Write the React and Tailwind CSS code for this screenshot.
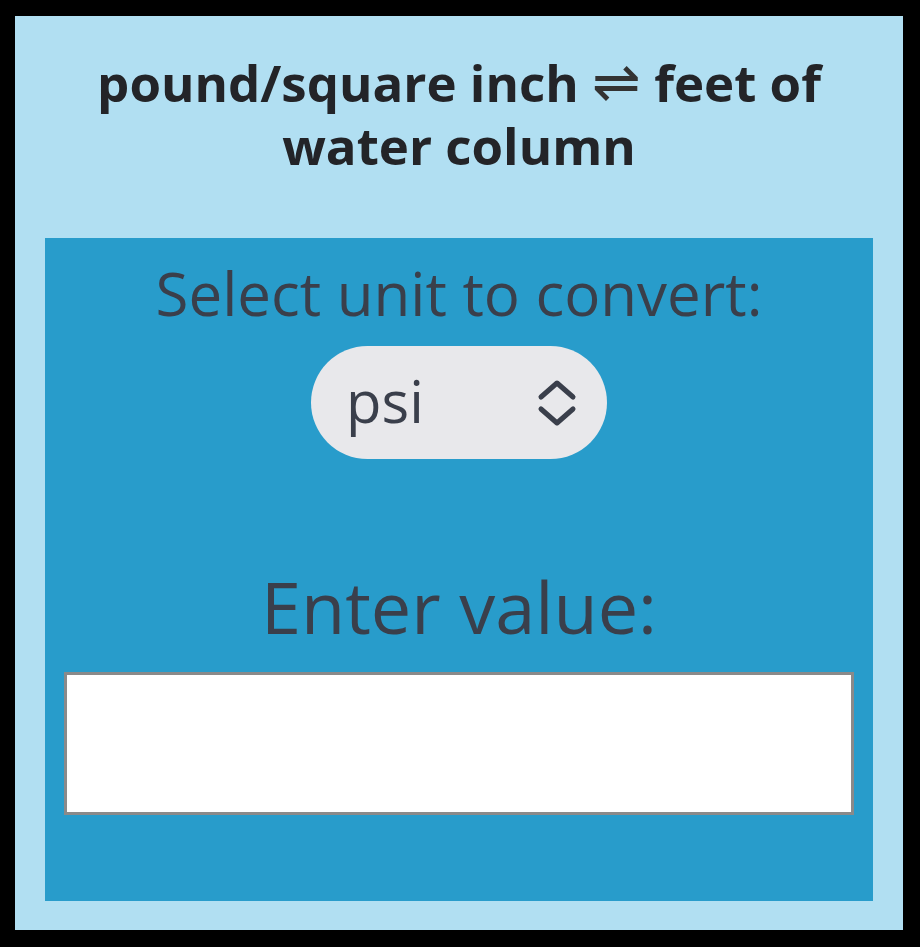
export default function App() {
  return (
    <div className="w-[920px] h-[947px] bg-black pt-[16px] pl-[15px] pr-[17px] pb-[17px]" style={{ fontFamily: '"Open Sans", sans-serif' }}>
      <div className="h-full bg-[#b1dff2] flex flex-col px-[30px] pb-[29px]">
        <h1 className="h-[222px] pt-[35px] text-center font-bold text-[51px] leading-[63px] text-[#232428] px-[20px]">
          pound/square inch{" "}
          <span className="inline-block align-top text-[58px] leading-[63px] text-[#333]" style={{ fontFamily: '"DejaVu Sans", sans-serif', fontWeight: 200 }}>⇌</span>{" "}
          feet of water column
        </h1>
        <div className="flex-1 bg-[#289ccb] flex flex-col items-center px-[19px]">
          <div className="mt-[20px] text-[60px] leading-[70px] text-[#3a3f4b]">Select unit to convert:</div>
          <div className="mt-[18px] w-[296px] h-[113px] rounded-full bg-[#e8e8eb] flex items-center justify-between pl-[35px] pr-[30px]">
            <span className="text-[58px] leading-none text-[#3a3f4b] -mt-[4px]">psi</span>
            <svg width="40" height="48" viewBox="0 0 40 48" fill="none" stroke="#3a3f4b" strokeWidth="5" strokeLinecap="round" strokeLinejoin="round">
              <path d="M4 18 L20 4 L36 18" />
              <path d="M4 30 L20 44 L36 30" />
            </svg>
          </div>
          <div className="mt-[102px] text-[72px] leading-[90px] text-[#3a3f4b]">Enter value:</div>
          <div className="mt-[21px] w-full h-[143px] bg-white border-[3px] border-[#8a8a8a]"></div>
        </div>
      </div>
    </div>
  );
}
